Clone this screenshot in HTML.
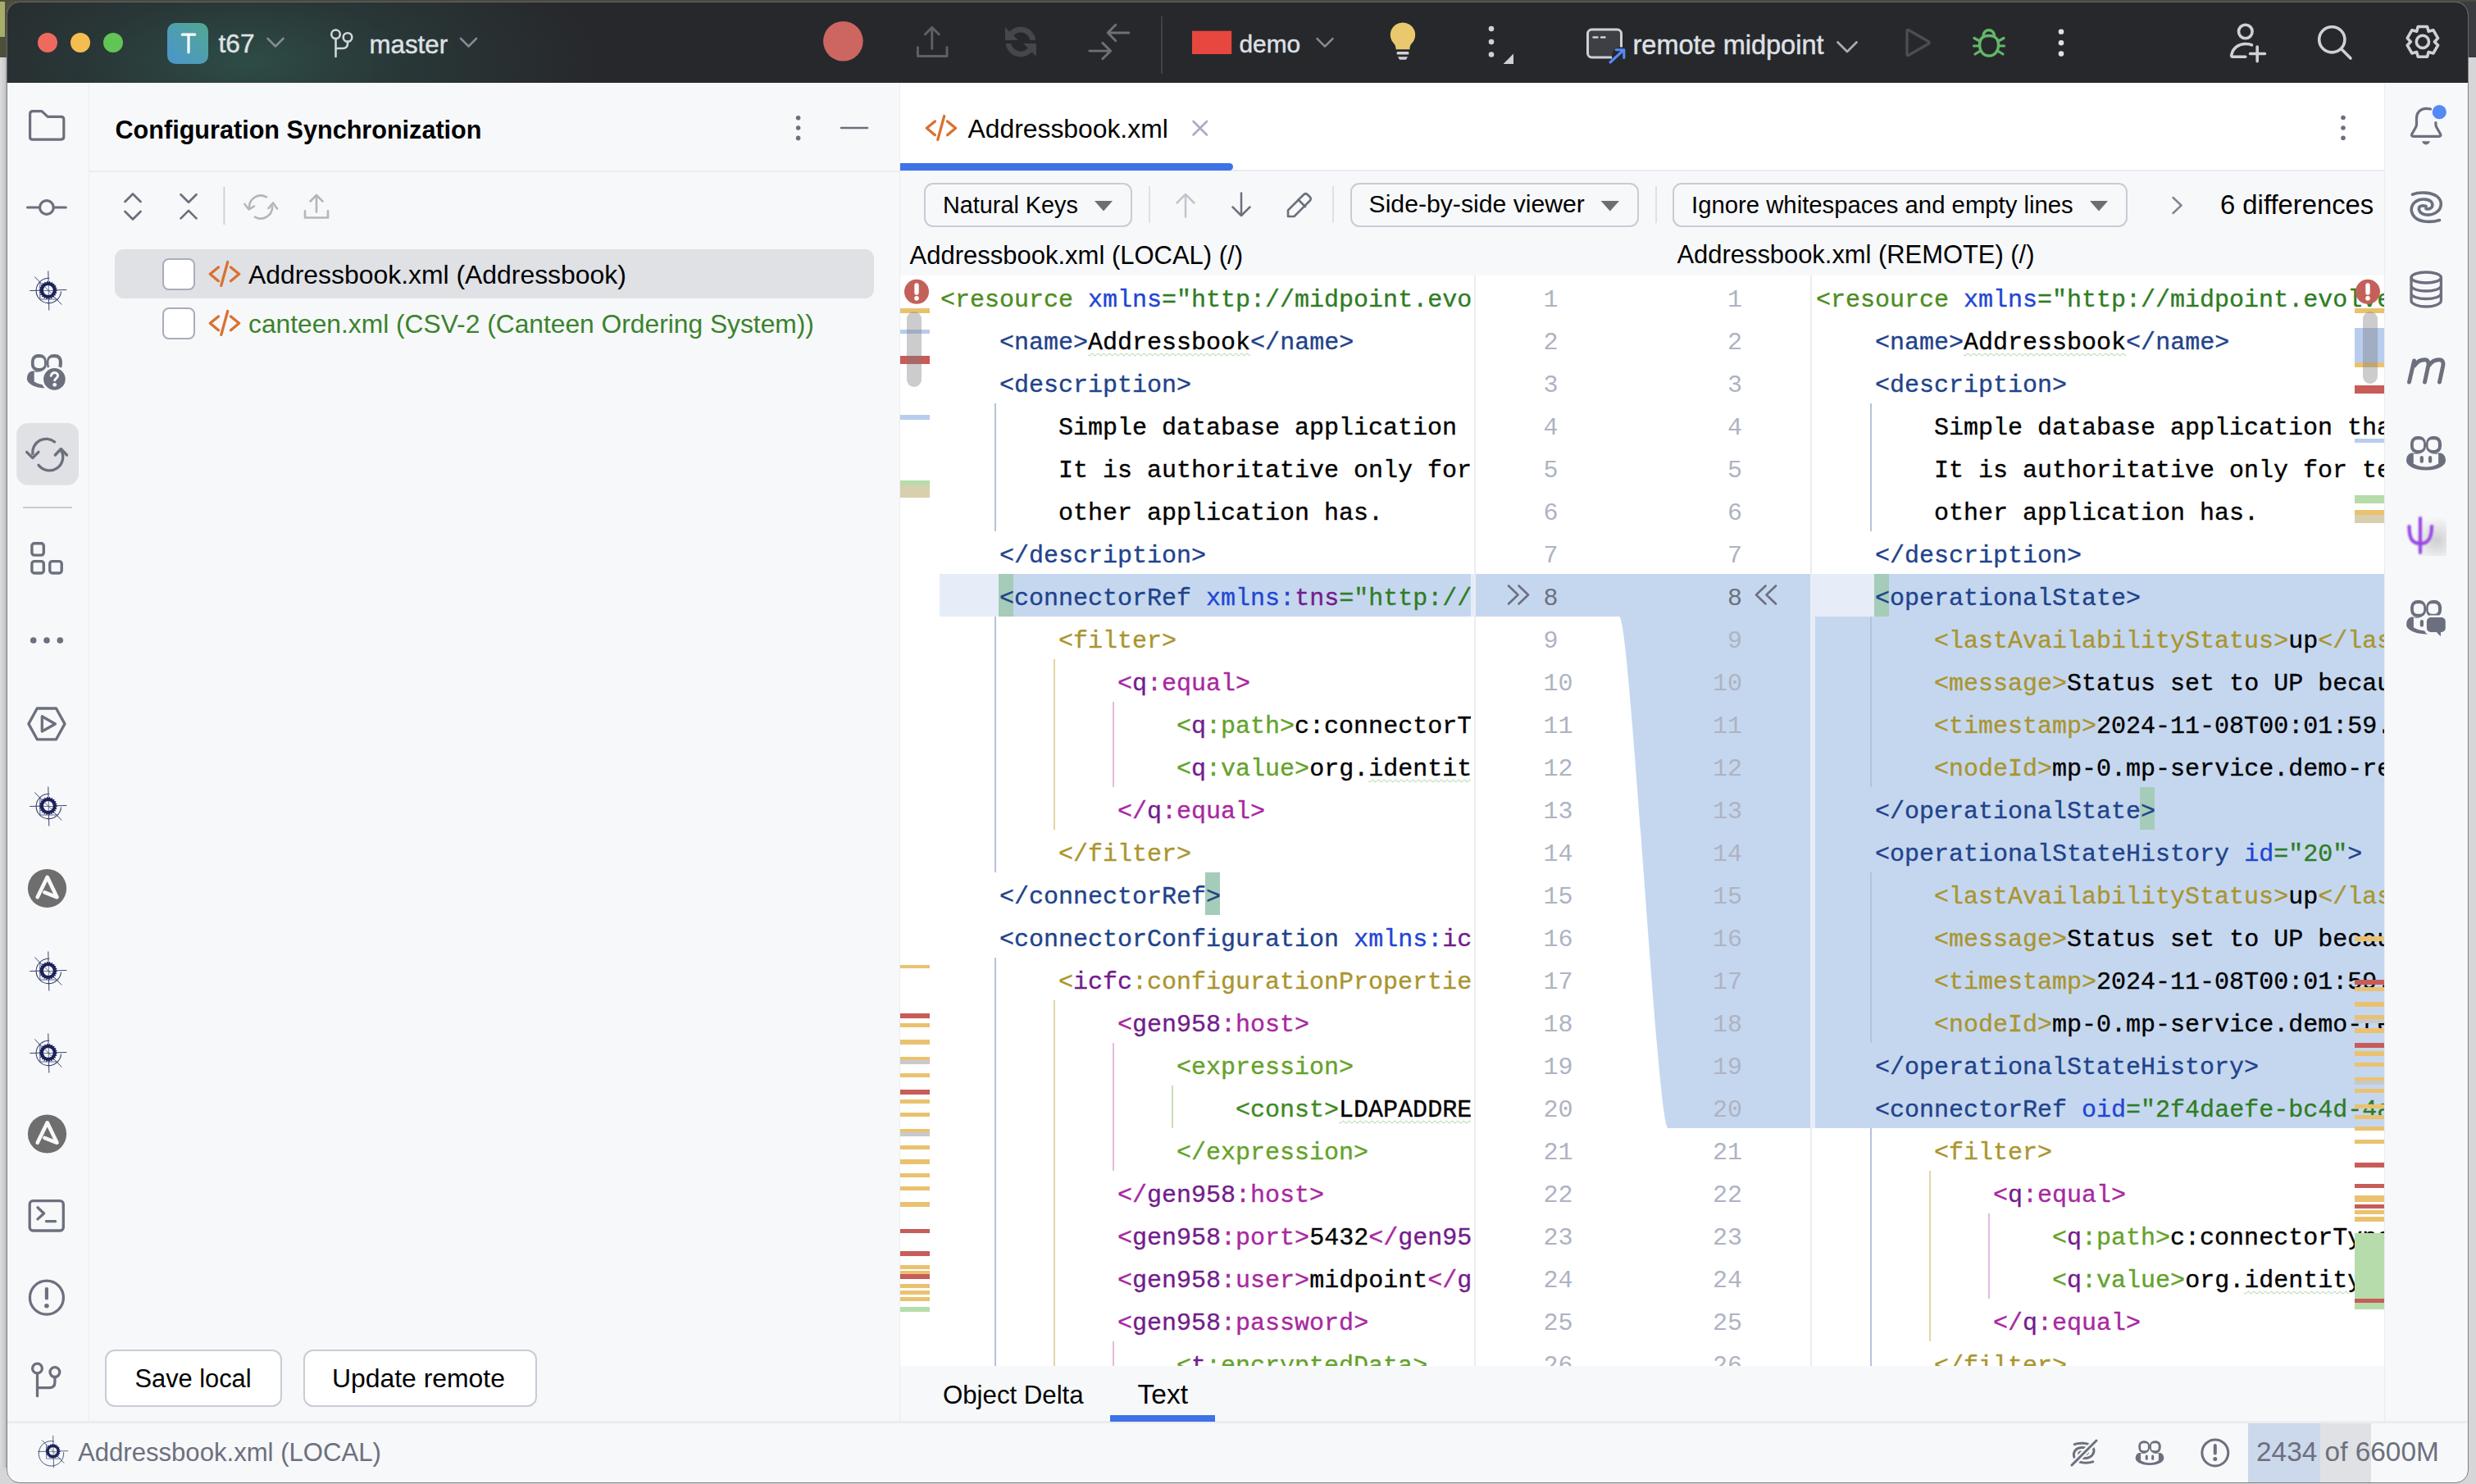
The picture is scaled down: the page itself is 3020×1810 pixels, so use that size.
<!DOCTYPE html>
<html><head><meta charset="utf-8"><style>
*{box-sizing:border-box;margin:0;padding:0}
html,body{width:3020px;height:1810px;overflow:hidden}
body{background:#d3d3d5;font-family:"Liberation Sans",sans-serif;position:relative}
.abs{position:absolute;display:block}
#win{position:absolute;left:0;top:0;width:3020px;height:1810px;clip-path:inset(2px 10px 2px 8px round 15px);background:#f7f8fa;overflow:hidden}
.ui{position:absolute;white-space:pre;line-height:1;font-family:"Liberation Sans",sans-serif}
.code{position:absolute;white-space:pre;font-family:"Liberation Mono",monospace;font-size:30px;line-height:52px;height:52px;color:#000;-webkit-text-stroke:0.35px currentColor}
.ln{position:absolute;white-space:pre;font-family:"Liberation Mono",monospace;font-size:30px;line-height:52px;height:52px;color:#aeb3c2}
</style></head><body>
<div class="abs" style="left:0px;top:0px;width:3020px;height:1810px;background:#d6d6d8;"></div>
<div class="abs" style="left:0;top:70px;width:8px;height:1720px;background:linear-gradient(90deg,#dcdcdc,#cacacc 75%,#a9aaad)"></div>
<div class="abs" style="left:0px;top:0px;width:1500px;height:70px;background:#4d4f3a;"></div>
<div class="abs" style="left:0px;top:0px;width:6px;height:45px;background:#a7ad6a;"></div>
<div class="abs" style="left:2990px;top:0px;width:30px;height:70px;background:#3b3c40;"></div>
<div class="abs" style="left:0px;top:0px;width:3020px;height:2px;background:#4a4b3c;"></div>
<div id="win">
<div class="abs" style="left:0px;top:0px;width:3020px;height:101px;background:#27282c;"></div>
<div class="abs" style="left:0;top:0;width:1400px;height:101px;background:radial-gradient(ellipse 430px 170px at 300px 75px,rgba(46,78,72,.95) 0%,rgba(42,64,62,.6) 45%,rgba(39,40,44,0) 100%)"></div>
<div class="abs" style="left:8px;top:101px;width:3002px;height:1707px;background:#f7f8fa;"></div>
<div class="abs" style="left:108px;top:101px;width:1px;height:1633px;background:#ebecf0;"></div>
<div class="abs" style="left:109px;top:208px;width:988px;height:2px;background:#ebecf0;"></div>
<div class="abs" style="left:1097px;top:101px;width:1px;height:1633px;background:#ebecf0;"></div>
<div class="abs" style="left:1098px;top:101px;width:1810px;height:106px;background:#ffffff;"></div>
<div class="abs" style="left:1098px;top:207px;width:1810px;height:2px;background:#ebecf0;"></div>
<div class="abs" style="left:1098px;top:336px;width:1810px;height:1330px;background:#ffffff;"></div>
<div class="abs" style="left:2908px;top:101px;width:1px;height:1633px;background:#ebecf0;"></div>
<div class="abs" style="left:8px;top:1733px;width:3002px;height:3px;background:#ebecf0;"></div>
<div class="abs" style="left:140px;top:304px;width:926px;height:59.5px;border-radius:11px;background:#dfe1e5"></div>
<div class="abs" style="left:198px;top:314.5px;width:40px;height:39px;border-radius:8px;background:#fff;border:2.4px solid #a9adbb"></div>
<div class="abs" style="left:198px;top:374.5px;width:40px;height:39px;border-radius:8px;background:#fff;border:2.4px solid #a9adbb"></div>
<div class="abs" style="left:127.5px;top:1645.5px;width:216.5px;height:70.5px;border-radius:12px;background:#fff;border:2.4px solid #c9ccd6"></div>
<div class="abs" style="left:369.5px;top:1645.5px;width:285px;height:70.5px;border-radius:12px;background:#fff;border:2.4px solid #c9ccd6"></div>
<div class="abs" style="left:1126.7px;top:222.7px;width:254.29999999999995px;height:54.5px;border-radius:11px;border:2.4px solid #c9ccd6"></div>
<div class="abs" style="left:1646.6px;top:222.7px;width:352.4000000000001px;height:54.5px;border-radius:11px;border:2.4px solid #c9ccd6"></div>
<div class="abs" style="left:2040.3px;top:222.7px;width:555.2px;height:54.5px;border-radius:11px;border:2.4px solid #c9ccd6"></div>
<div class="abs" style="left:1400.5px;top:226.5px;width:2.0px;height:45.0px;background:#dfe1e5;"></div>
<div class="abs" style="left:1624.5px;top:226.5px;width:2.0px;height:45.0px;background:#dfe1e5;"></div>
<div class="abs" style="left:2018.5px;top:226.5px;width:2.0px;height:45.0px;background:#dfe1e5;"></div>
<div class="abs" style="left:1098px;top:198.5px;width:406px;height:9px;border-radius:0 4.5px 4.5px 0;background:#3f72e6"></div>
<div class="abs" style="left:1354px;top:1726px;width:128px;height:8px;background:#3f72e6;"></div>
<div class="abs" style="left:2742px;top:1736px;width:88px;height:72px;background:#ccd8ec;"></div>
<div class="abs" style="left:2830px;top:1736px;width:62px;height:72px;background:#dfe1e5;"></div>
<div class="abs" style="left:1146px;top:700px;width:72px;height:52px;background:#e6edf8;"></div>
<div class="abs" style="left:1218px;top:700px;width:576px;height:52px;background:#c5d7ef;"></div>
<div class="abs" style="left:1794px;top:700px;width:4px;height:52px;background:#e6edf8;"></div>
<div class="abs" style="left:1218px;top:700px;width:18px;height:52px;background:#a5ccb9;"></div>
<div class="abs" style="left:1470px;top:1064px;width:18px;height:52px;background:#a5ccb9;"></div>
<div class="abs" style="left:2210px;top:700px;width:76px;height:52px;background:#e6edf8;"></div>
<div class="abs" style="left:2286px;top:700px;width:622px;height:52px;background:#c5d7ef;"></div>
<div class="abs" style="left:2210px;top:752px;width:4px;height:624px;background:#e6edf8;"></div>
<div class="abs" style="left:2214px;top:752px;width:694px;height:624px;background:#c5d7ef;"></div>
<div class="abs" style="left:2286px;top:700px;width:18px;height:52px;background:#a5ccb9;"></div>
<div class="abs" style="left:2610px;top:960px;width:18px;height:52px;background:#a5ccb9;"></div>
<div class="abs" style="left:1798px;top:336px;width:2px;height:1330px;background:#ebecf0;"></div>
<div class="abs" style="left:2208px;top:336px;width:2px;height:1330px;background:#ebecf0;"></div>
<svg class="abs" style="left:0;top:0" width="3020" height="1810" viewBox="0 0 3020 1810"><path d="M1800,700 L2208,700 L2208,1376 L2034.5,1376 C2021,1376 1988.5,752 1975,752 L1800,752 Z" fill="#c5d7ef"/></svg>
<div class="abs" style="left:1213px;top:492px;width:2px;height:156px;background:#b6c3da;"></div>
<div class="abs" style="left:1213px;top:752px;width:2px;height:312px;background:#b6c3da;"></div>
<div class="abs" style="left:1285px;top:804px;width:2px;height:208px;background:#e2d6a6;"></div>
<div class="abs" style="left:1357px;top:856px;width:2px;height:104px;background:#e6b8e2;"></div>
<div class="abs" style="left:1213px;top:1168px;width:2px;height:498px;background:#b6c3da;"></div>
<div class="abs" style="left:1285px;top:1220px;width:2px;height:446px;background:#e2d6a6;"></div>
<div class="abs" style="left:1357px;top:1272px;width:2px;height:156px;background:#e6b8e2;"></div>
<div class="abs" style="left:1429px;top:1324px;width:2px;height:52px;background:#c6e1b4;"></div>
<div class="abs" style="left:1357px;top:1636px;width:2px;height:30px;background:#e6b8e2;"></div>
<div class="abs" style="left:2281px;top:492px;width:2px;height:156px;background:#b6c3da;"></div>
<div class="abs" style="left:2281px;top:752px;width:2px;height:208px;background:#b6c3da;"></div>
<div class="abs" style="left:2281px;top:1064px;width:2px;height:208px;background:#b6c3da;"></div>
<div class="abs" style="left:2281px;top:1376px;width:2px;height:290px;background:#b6c3da;"></div>
<div class="abs" style="left:2353px;top:1428px;width:2px;height:208px;background:#e2d6a6;"></div>
<div class="abs" style="left:2425px;top:1480px;width:2px;height:104px;background:#e6b8e2;"></div>
<div class="abs" style="left:1140px;top:336px;width:654px;height:1330px;overflow:hidden">
<div class="code" style="left:7px;top:4px"><span style="color:#4d8d22;">&lt;</span><span style="color:#4d8d22;">resource</span> <span style="color:#2146d4;">xmlns</span><span style="color:#2f7d24;">=&quot;http://midpoint.evolveum.com/xml/ns/public/common/common-3&quot;</span></div>
<div class="code" style="left:7px;top:56px">    <span style="color:#1f438b;">&lt;</span><span style="color:#1f438b;">name</span><span style="color:#1f438b;">&gt;</span><span style="color:#000;text-decoration:underline wavy #a3cf98;text-decoration-thickness:1.3px;text-underline-offset:4px">Addressbook</span><span style="color:#1f438b;">&lt;/</span><span style="color:#1f438b;">name</span><span style="color:#1f438b;">&gt;</span></div>
<div class="code" style="left:7px;top:108px">    <span style="color:#1f438b;">&lt;</span><span style="color:#1f438b;">description</span><span style="color:#1f438b;">&gt;</span></div>
<div class="code" style="left:7px;top:160px">        <span style="color:#000000;">Simple database application that is used for testing</span></div>
<div class="code" style="left:7px;top:212px">        <span style="color:#000000;">It is authoritative only for testing purposes</span></div>
<div class="code" style="left:7px;top:264px">        <span style="color:#000000;">other application has.</span></div>
<div class="code" style="left:7px;top:316px">    <span style="color:#1f438b;">&lt;/</span><span style="color:#1f438b;">description</span><span style="color:#1f438b;">&gt;</span></div>
<div class="code" style="left:7px;top:368px">    <span style="color:#1f438b;">&lt;</span><span style="color:#1f438b;">connectorRef</span> <span style="color:#2146d4;">xmlns:</span><span style="color:#731c8c;">tns</span><span style="color:#2f7d24;">=&quot;http://midpoint.evolveum.com/xml/ns/public/common/common-3&quot;</span></div>
<div class="code" style="left:7px;top:420px">        <span style="color:#aa952f;">&lt;</span><span style="color:#aa952f;">filter</span><span style="color:#aa952f;">&gt;</span></div>
<div class="code" style="left:7px;top:472px">            <span style="color:#a8289f;">&lt;</span><span style="color:#731c8c;">q</span><span style="color:#a8289f;">:equal</span><span style="color:#a8289f;">&gt;</span></div>
<div class="code" style="left:7px;top:524px">                <span style="color:#64a22b;">&lt;</span><span style="color:#731c8c;">q</span><span style="color:#64a22b;">:path</span><span style="color:#64a22b;">&gt;</span><span style="color:#000000;">c:connectorType</span></div>
<div class="code" style="left:7px;top:576px">                <span style="color:#64a22b;">&lt;</span><span style="color:#731c8c;">q</span><span style="color:#64a22b;">:value</span><span style="color:#64a22b;">&gt;</span><span style="color:#000000;">org.</span><span style="color:#000;text-decoration:underline wavy #a3cf98;text-decoration-thickness:1.3px;text-underline-offset:4px">identityconnectors</span></div>
<div class="code" style="left:7px;top:628px">            <span style="color:#a8289f;">&lt;/</span><span style="color:#731c8c;">q</span><span style="color:#a8289f;">:equal</span><span style="color:#a8289f;">&gt;</span></div>
<div class="code" style="left:7px;top:680px">        <span style="color:#aa952f;">&lt;/</span><span style="color:#aa952f;">filter</span><span style="color:#aa952f;">&gt;</span></div>
<div class="code" style="left:7px;top:732px">    <span style="color:#1f438b;">&lt;/</span><span style="color:#1f438b;">connectorRef</span><span style="color:#1f438b;">&gt;</span></div>
<div class="code" style="left:7px;top:784px">    <span style="color:#1f438b;">&lt;</span><span style="color:#1f438b;">connectorConfiguration</span> <span style="color:#2146d4;">xmlns:</span><span style="color:#731c8c;">icfc</span><span style="color:#2f7d24;">=&quot;http://midpoint&quot;</span></div>
<div class="code" style="left:7px;top:836px">        <span style="color:#aa952f;">&lt;</span><span style="color:#731c8c;">icfc</span><span style="color:#aa952f;">:configurationProperties</span> </div>
<div class="code" style="left:7px;top:888px">            <span style="color:#a8289f;">&lt;</span><span style="color:#731c8c;">gen958</span><span style="color:#a8289f;">:host</span><span style="color:#a8289f;">&gt;</span></div>
<div class="code" style="left:7px;top:940px">                <span style="color:#64a22b;">&lt;</span><span style="color:#64a22b;">expression</span><span style="color:#64a22b;">&gt;</span></div>
<div class="code" style="left:7px;top:992px">                    <span style="color:#3e8a25;">&lt;</span><span style="color:#3e8a25;">const</span><span style="color:#3e8a25;">&gt;</span><span style="color:#000;text-decoration:underline wavy #a3cf98;text-decoration-thickness:1.3px;text-underline-offset:4px">LDAPADDRESS</span></div>
<div class="code" style="left:7px;top:1044px">                <span style="color:#64a22b;">&lt;/</span><span style="color:#64a22b;">expression</span><span style="color:#64a22b;">&gt;</span></div>
<div class="code" style="left:7px;top:1096px">            <span style="color:#a8289f;">&lt;/</span><span style="color:#731c8c;">gen958</span><span style="color:#a8289f;">:host</span><span style="color:#a8289f;">&gt;</span></div>
<div class="code" style="left:7px;top:1148px">            <span style="color:#a8289f;">&lt;</span><span style="color:#731c8c;">gen958</span><span style="color:#a8289f;">:port</span><span style="color:#a8289f;">&gt;</span><span style="color:#000000;">5432</span><span style="color:#a8289f;">&lt;/</span><span style="color:#731c8c;">gen958</span><span style="color:#a8289f;">:port</span><span style="color:#a8289f;">&gt;</span></div>
<div class="code" style="left:7px;top:1200px">            <span style="color:#a8289f;">&lt;</span><span style="color:#731c8c;">gen958</span><span style="color:#a8289f;">:user</span><span style="color:#a8289f;">&gt;</span><span style="color:#000000;">midpoint</span><span style="color:#a8289f;">&lt;/</span><span style="color:#731c8c;">gen958</span><span style="color:#a8289f;">:user</span><span style="color:#a8289f;">&gt;</span></div>
<div class="code" style="left:7px;top:1252px">            <span style="color:#a8289f;">&lt;</span><span style="color:#731c8c;">gen958</span><span style="color:#a8289f;">:password</span><span style="color:#a8289f;">&gt;</span></div>
<div class="code" style="left:7px;top:1304px">                <span style="color:#64a22b;">&lt;</span><span style="color:#731c8c;">t</span><span style="color:#64a22b;">:encryptedData</span><span style="color:#64a22b;">&gt;</span></div>
</div>
<div class="abs" style="left:2210px;top:336px;width:698px;height:1330px;overflow:hidden">
<div class="code" style="left:5px;top:4px"><span style="color:#4d8d22;">&lt;</span><span style="color:#4d8d22;">resource</span> <span style="color:#2146d4;">xmlns</span><span style="color:#2f7d24;">=&quot;http://midpoint.evolveum.com/xml/ns/public/common/common-3&quot;</span></div>
<div class="code" style="left:5px;top:56px">    <span style="color:#1f438b;">&lt;</span><span style="color:#1f438b;">name</span><span style="color:#1f438b;">&gt;</span><span style="color:#000;text-decoration:underline wavy #a3cf98;text-decoration-thickness:1.3px;text-underline-offset:4px">Addressbook</span><span style="color:#1f438b;">&lt;/</span><span style="color:#1f438b;">name</span><span style="color:#1f438b;">&gt;</span></div>
<div class="code" style="left:5px;top:108px">    <span style="color:#1f438b;">&lt;</span><span style="color:#1f438b;">description</span><span style="color:#1f438b;">&gt;</span></div>
<div class="code" style="left:5px;top:160px">        <span style="color:#000000;">Simple database application that is used for testing</span></div>
<div class="code" style="left:5px;top:212px">        <span style="color:#000000;">It is authoritative only for testing purposes</span></div>
<div class="code" style="left:5px;top:264px">        <span style="color:#000000;">other application has.</span></div>
<div class="code" style="left:5px;top:316px">    <span style="color:#1f438b;">&lt;/</span><span style="color:#1f438b;">description</span><span style="color:#1f438b;">&gt;</span></div>
<div class="code" style="left:5px;top:368px">    <span style="color:#1f438b;">&lt;</span><span style="color:#1f438b;">operationalState</span><span style="color:#1f438b;">&gt;</span></div>
<div class="code" style="left:5px;top:420px">        <span style="color:#aa952f;">&lt;</span><span style="color:#aa952f;">lastAvailabilityStatus</span><span style="color:#aa952f;">&gt;</span><span style="color:#000000;">up</span><span style="color:#aa952f;">&lt;/</span><span style="color:#aa952f;">lastAvailabilityStatus</span><span style="color:#aa952f;">&gt;</span></div>
<div class="code" style="left:5px;top:472px">        <span style="color:#aa952f;">&lt;</span><span style="color:#aa952f;">message</span><span style="color:#aa952f;">&gt;</span><span style="color:#000000;">Status set to UP because</span></div>
<div class="code" style="left:5px;top:524px">        <span style="color:#aa952f;">&lt;</span><span style="color:#aa952f;">timestamp</span><span style="color:#aa952f;">&gt;</span><span style="color:#000000;">2024-11-08T00:01:59.123Z</span></div>
<div class="code" style="left:5px;top:576px">        <span style="color:#aa952f;">&lt;</span><span style="color:#aa952f;">nodeId</span><span style="color:#aa952f;">&gt;</span><span style="color:#000000;">mp-0.mp-service.demo-remote</span></div>
<div class="code" style="left:5px;top:628px">    <span style="color:#1f438b;">&lt;/</span><span style="color:#1f438b;">operationalState</span><span style="color:#1f438b;">&gt;</span></div>
<div class="code" style="left:5px;top:680px">    <span style="color:#1f438b;">&lt;</span><span style="color:#1f438b;">operationalStateHistory</span> <span style="color:#2146d4;">id</span><span style="color:#2f7d24;">=&quot;20&quot;</span><span style="color:#1f438b;">&gt;</span></div>
<div class="code" style="left:5px;top:732px">        <span style="color:#aa952f;">&lt;</span><span style="color:#aa952f;">lastAvailabilityStatus</span><span style="color:#aa952f;">&gt;</span><span style="color:#000000;">up</span><span style="color:#aa952f;">&lt;/</span><span style="color:#aa952f;">lastAvailabilityStatus</span><span style="color:#aa952f;">&gt;</span></div>
<div class="code" style="left:5px;top:784px">        <span style="color:#aa952f;">&lt;</span><span style="color:#aa952f;">message</span><span style="color:#aa952f;">&gt;</span><span style="color:#000000;">Status set to UP because</span></div>
<div class="code" style="left:5px;top:836px">        <span style="color:#aa952f;">&lt;</span><span style="color:#aa952f;">timestamp</span><span style="color:#aa952f;">&gt;</span><span style="color:#000000;">2024-11-08T00:01:59.123Z</span></div>
<div class="code" style="left:5px;top:888px">        <span style="color:#aa952f;">&lt;</span><span style="color:#aa952f;">nodeId</span><span style="color:#aa952f;">&gt;</span><span style="color:#000000;">mp-0.mp-service.demo-remote</span></div>
<div class="code" style="left:5px;top:940px">    <span style="color:#1f438b;">&lt;/</span><span style="color:#1f438b;">operationalStateHistory</span><span style="color:#1f438b;">&gt;</span></div>
<div class="code" style="left:5px;top:992px">    <span style="color:#1f438b;">&lt;</span><span style="color:#1f438b;">connectorRef</span> <span style="color:#2146d4;">oid</span><span style="color:#2f7d24;">=&quot;2f4daefe-bc4d-4a2b&quot;</span></div>
<div class="code" style="left:5px;top:1044px">        <span style="color:#aa952f;">&lt;</span><span style="color:#aa952f;">filter</span><span style="color:#aa952f;">&gt;</span></div>
<div class="code" style="left:5px;top:1096px">            <span style="color:#a8289f;">&lt;</span><span style="color:#731c8c;">q</span><span style="color:#a8289f;">:equal</span><span style="color:#a8289f;">&gt;</span></div>
<div class="code" style="left:5px;top:1148px">                <span style="color:#64a22b;">&lt;</span><span style="color:#731c8c;">q</span><span style="color:#64a22b;">:path</span><span style="color:#64a22b;">&gt;</span><span style="color:#000000;">c:connectorType</span></div>
<div class="code" style="left:5px;top:1200px">                <span style="color:#64a22b;">&lt;</span><span style="color:#731c8c;">q</span><span style="color:#64a22b;">:value</span><span style="color:#64a22b;">&gt;</span><span style="color:#000000;">org.</span><span style="color:#000;text-decoration:underline wavy #a3cf98;text-decoration-thickness:1.3px;text-underline-offset:4px">identityconnectors</span></div>
<div class="code" style="left:5px;top:1252px">            <span style="color:#a8289f;">&lt;/</span><span style="color:#731c8c;">q</span><span style="color:#a8289f;">:equal</span><span style="color:#a8289f;">&gt;</span></div>
<div class="code" style="left:5px;top:1304px">        <span style="color:#aa952f;">&lt;/</span><span style="color:#aa952f;">filter</span><span style="color:#aa952f;">&gt;</span></div>
</div>
<div class="abs" style="left:1800px;top:336px;width:408px;height:1330px;overflow:hidden">
<div class="ln" style="left:82.5px;top:4px;color:#aeb3c2">1</div>
<div class="ln" style="left:125px;width:200px;text-align:right;top:4px;color:#aeb3c2">1</div>
<div class="ln" style="left:82.5px;top:56px;color:#aeb3c2">2</div>
<div class="ln" style="left:125px;width:200px;text-align:right;top:56px;color:#aeb3c2">2</div>
<div class="ln" style="left:82.5px;top:108px;color:#aeb3c2">3</div>
<div class="ln" style="left:125px;width:200px;text-align:right;top:108px;color:#aeb3c2">3</div>
<div class="ln" style="left:82.5px;top:160px;color:#aeb3c2">4</div>
<div class="ln" style="left:125px;width:200px;text-align:right;top:160px;color:#aeb3c2">4</div>
<div class="ln" style="left:82.5px;top:212px;color:#aeb3c2">5</div>
<div class="ln" style="left:125px;width:200px;text-align:right;top:212px;color:#aeb3c2">5</div>
<div class="ln" style="left:82.5px;top:264px;color:#aeb3c2">6</div>
<div class="ln" style="left:125px;width:200px;text-align:right;top:264px;color:#aeb3c2">6</div>
<div class="ln" style="left:82.5px;top:316px;color:#aeb3c2">7</div>
<div class="ln" style="left:125px;width:200px;text-align:right;top:316px;color:#aeb3c2">7</div>
<div class="ln" style="left:82.5px;top:368px;color:#6c707e">8</div>
<div class="ln" style="left:125px;width:200px;text-align:right;top:368px;color:#6c707e">8</div>
<div class="ln" style="left:82.5px;top:420px;color:#aeb3c2">9</div>
<div class="ln" style="left:125px;width:200px;text-align:right;top:420px;color:#aeb3c2">9</div>
<div class="ln" style="left:82.5px;top:472px;color:#aeb3c2">10</div>
<div class="ln" style="left:125px;width:200px;text-align:right;top:472px;color:#aeb3c2">10</div>
<div class="ln" style="left:82.5px;top:524px;color:#aeb3c2">11</div>
<div class="ln" style="left:125px;width:200px;text-align:right;top:524px;color:#aeb3c2">11</div>
<div class="ln" style="left:82.5px;top:576px;color:#aeb3c2">12</div>
<div class="ln" style="left:125px;width:200px;text-align:right;top:576px;color:#aeb3c2">12</div>
<div class="ln" style="left:82.5px;top:628px;color:#aeb3c2">13</div>
<div class="ln" style="left:125px;width:200px;text-align:right;top:628px;color:#aeb3c2">13</div>
<div class="ln" style="left:82.5px;top:680px;color:#aeb3c2">14</div>
<div class="ln" style="left:125px;width:200px;text-align:right;top:680px;color:#aeb3c2">14</div>
<div class="ln" style="left:82.5px;top:732px;color:#aeb3c2">15</div>
<div class="ln" style="left:125px;width:200px;text-align:right;top:732px;color:#aeb3c2">15</div>
<div class="ln" style="left:82.5px;top:784px;color:#aeb3c2">16</div>
<div class="ln" style="left:125px;width:200px;text-align:right;top:784px;color:#aeb3c2">16</div>
<div class="ln" style="left:82.5px;top:836px;color:#aeb3c2">17</div>
<div class="ln" style="left:125px;width:200px;text-align:right;top:836px;color:#aeb3c2">17</div>
<div class="ln" style="left:82.5px;top:888px;color:#aeb3c2">18</div>
<div class="ln" style="left:125px;width:200px;text-align:right;top:888px;color:#aeb3c2">18</div>
<div class="ln" style="left:82.5px;top:940px;color:#aeb3c2">19</div>
<div class="ln" style="left:125px;width:200px;text-align:right;top:940px;color:#aeb3c2">19</div>
<div class="ln" style="left:82.5px;top:992px;color:#aeb3c2">20</div>
<div class="ln" style="left:125px;width:200px;text-align:right;top:992px;color:#aeb3c2">20</div>
<div class="ln" style="left:82.5px;top:1044px;color:#aeb3c2">21</div>
<div class="ln" style="left:125px;width:200px;text-align:right;top:1044px;color:#aeb3c2">21</div>
<div class="ln" style="left:82.5px;top:1096px;color:#aeb3c2">22</div>
<div class="ln" style="left:125px;width:200px;text-align:right;top:1096px;color:#aeb3c2">22</div>
<div class="ln" style="left:82.5px;top:1148px;color:#aeb3c2">23</div>
<div class="ln" style="left:125px;width:200px;text-align:right;top:1148px;color:#aeb3c2">23</div>
<div class="ln" style="left:82.5px;top:1200px;color:#aeb3c2">24</div>
<div class="ln" style="left:125px;width:200px;text-align:right;top:1200px;color:#aeb3c2">24</div>
<div class="ln" style="left:82.5px;top:1252px;color:#aeb3c2">25</div>
<div class="ln" style="left:125px;width:200px;text-align:right;top:1252px;color:#aeb3c2">25</div>
<div class="ln" style="left:82.5px;top:1304px;color:#aeb3c2">26</div>
<div class="ln" style="left:125px;width:200px;text-align:right;top:1304px;color:#aeb3c2">26</div>
</div>
<div class="abs" style="left:1098px;top:376px;width:36px;height:5.600000000000023px;background:#eac26f;"></div>
<div class="abs" style="left:1098px;top:402px;width:36px;height:5px;background:#b8cdee;"></div>
<div class="abs" style="left:1098px;top:434px;width:36px;height:9.5px;background:#c75c58;"></div>
<div class="abs" style="left:1098px;top:506px;width:36px;height:5.5px;background:#b8cdee;"></div>
<div class="abs" style="left:1098px;top:586px;width:36px;height:6px;background:#b6dcab;"></div>
<div class="abs" style="left:1098px;top:592px;width:36px;height:15px;background:#d7cfae;"></div>
<div class="abs" style="left:1098px;top:1176.6px;width:36px;height:4.900000000000091px;background:#eac26f;"></div>
<div class="abs" style="left:1098px;top:1236px;width:36px;height:5.7999999999999545px;background:#c75c58;"></div>
<div class="abs" style="left:1098px;top:1248px;width:36px;height:5px;background:#eac26f;"></div>
<div class="abs" style="left:1098px;top:1268px;width:36px;height:6px;background:#eac26f;"></div>
<div class="abs" style="left:1098px;top:1288.7px;width:36px;height:4.2999999999999545px;background:#eac26f;"></div>
<div class="abs" style="left:1098px;top:1293px;width:36px;height:5px;background:#c8c9cc;"></div>
<div class="abs" style="left:1098px;top:1308.7px;width:36px;height:5.2999999999999545px;background:#eac26f;"></div>
<div class="abs" style="left:1098px;top:1328.7px;width:36px;height:5.899999999999864px;background:#c75c58;"></div>
<div class="abs" style="left:1098px;top:1341px;width:36px;height:5px;background:#eac26f;"></div>
<div class="abs" style="left:1098px;top:1357px;width:36px;height:5px;background:#eac26f;"></div>
<div class="abs" style="left:1098px;top:1376.6px;width:36px;height:4.400000000000091px;background:#eac26f;"></div>
<div class="abs" style="left:1098px;top:1381px;width:36px;height:5px;background:#c8c9cc;"></div>
<div class="abs" style="left:1098px;top:1396.6px;width:36px;height:5.400000000000091px;background:#eac26f;"></div>
<div class="abs" style="left:1098px;top:1414px;width:36px;height:5.5px;background:#eac26f;"></div>
<div class="abs" style="left:1098px;top:1430.6px;width:36px;height:5.400000000000091px;background:#eac26f;"></div>
<div class="abs" style="left:1098px;top:1446.8px;width:36px;height:5.2000000000000455px;background:#eac26f;"></div>
<div class="abs" style="left:1098px;top:1466.4px;width:36px;height:5.599999999999909px;background:#eac26f;"></div>
<div class="abs" style="left:1098px;top:1498.5px;width:36px;height:5.5px;background:#c75c58;"></div>
<div class="abs" style="left:1098px;top:1526.4px;width:36px;height:5.599999999999909px;background:#c75c58;"></div>
<div class="abs" style="left:1098px;top:1542.6px;width:36px;height:5.0px;background:#eac26f;"></div>
<div class="abs" style="left:1098px;top:1550px;width:36px;height:4px;background:#eac26f;"></div>
<div class="abs" style="left:1098px;top:1554px;width:36px;height:6px;background:#c75c58;"></div>
<div class="abs" style="left:1098px;top:1566px;width:36px;height:5px;background:#eac26f;"></div>
<div class="abs" style="left:1098px;top:1574px;width:36px;height:5px;background:#eac26f;"></div>
<div class="abs" style="left:1098px;top:1582px;width:36px;height:5px;background:#eac26f;"></div>
<div class="abs" style="left:1098px;top:1594px;width:36px;height:6px;background:#b6dcab;"></div>
<div class="abs" style="left:2872px;top:376px;width:36px;height:5.600000000000023px;background:#eac26f;"></div>
<div class="abs" style="left:2872px;top:400px;width:36px;height:42px;background:#b8cdee;"></div>
<div class="abs" style="left:2872px;top:442px;width:36px;height:5.699999999999989px;background:#eac26f;"></div>
<div class="abs" style="left:2872px;top:470px;width:36px;height:9.600000000000023px;background:#c75c58;"></div>
<div class="abs" style="left:2872px;top:534.5px;width:36px;height:5.0px;background:#b8cdee;"></div>
<div class="abs" style="left:2872px;top:604px;width:36px;height:9.799999999999955px;background:#b6dcab;"></div>
<div class="abs" style="left:2872px;top:621.8px;width:36px;height:6.2000000000000455px;background:#eac26f;"></div>
<div class="abs" style="left:2872px;top:628px;width:36px;height:10px;background:#d7cfae;"></div>
<div class="abs" style="left:2872px;top:1142px;width:36px;height:6px;background:#eac26f;"></div>
<div class="abs" style="left:2872px;top:1194.7px;width:36px;height:6.0px;background:#c75c58;"></div>
<div class="abs" style="left:2872px;top:1203.6px;width:36px;height:5.400000000000091px;background:#eac26f;"></div>
<div class="abs" style="left:2872px;top:1222px;width:36px;height:5.5px;background:#eac26f;"></div>
<div class="abs" style="left:2872px;top:1238px;width:36px;height:5px;background:#eac26f;"></div>
<div class="abs" style="left:2872px;top:1243px;width:36px;height:5px;background:#c8c9cc;"></div>
<div class="abs" style="left:2872px;top:1254px;width:36px;height:5.5px;background:#eac26f;"></div>
<div class="abs" style="left:2872px;top:1272px;width:36px;height:6px;background:#c75c58;"></div>
<div class="abs" style="left:2872px;top:1282px;width:36px;height:5.5px;background:#eac26f;"></div>
<div class="abs" style="left:2872px;top:1295.7px;width:36px;height:5.2999999999999545px;background:#eac26f;"></div>
<div class="abs" style="left:2872px;top:1313.5px;width:36px;height:4.5px;background:#eac26f;"></div>
<div class="abs" style="left:2872px;top:1318px;width:36px;height:5px;background:#c8c9cc;"></div>
<div class="abs" style="left:2872px;top:1328px;width:36px;height:5px;background:#eac26f;"></div>
<div class="abs" style="left:2872px;top:1346.8px;width:36px;height:5.2000000000000455px;background:#eac26f;"></div>
<div class="abs" style="left:2872px;top:1360px;width:36px;height:5px;background:#eac26f;"></div>
<div class="abs" style="left:2872px;top:1373.5px;width:36px;height:5.5px;background:#eac26f;"></div>
<div class="abs" style="left:2872px;top:1390px;width:36px;height:5px;background:#eac26f;"></div>
<div class="abs" style="left:2872px;top:1418px;width:36px;height:6px;background:#c75c58;"></div>
<div class="abs" style="left:2872px;top:1443.7px;width:36px;height:5.2999999999999545px;background:#c75c58;"></div>
<div class="abs" style="left:2872px;top:1458px;width:36px;height:8px;background:#eac26f;"></div>
<div class="abs" style="left:2872px;top:1469px;width:36px;height:5px;background:#c75c58;"></div>
<div class="abs" style="left:2872px;top:1476px;width:36px;height:5px;background:#eac26f;"></div>
<div class="abs" style="left:2872px;top:1484px;width:36px;height:6px;background:#eac26f;"></div>
<div class="abs" style="left:2872px;top:1503.8px;width:36px;height:93.20000000000005px;background:#b6dcab;"></div>
<div class="abs" style="left:2872px;top:1583.8px;width:36px;height:5.2000000000000455px;background:#c75c58;"></div>
<div class="abs" style="left:1106px;top:380px;width:17.7px;height:91.6px;border-radius:9px;background:rgba(120,120,125,.38)"></div>
<div class="abs" style="left:2882px;top:380px;width:18px;height:87.6px;border-radius:9px;background:rgba(120,120,125,.38)"></div>
<svg class="abs" style="left:0;top:0" width="3020" height="1810" viewBox="0 0 3020 1810"><circle cx="1118" cy="355.8" r="15" fill="#c4605a"/><path d="M1118,348 V357" stroke="#fff" stroke-width="5.4" stroke-linecap="round"/><circle cx="1118" cy="363.8" r="2.8" fill="#fff"/><circle cx="2888" cy="355.8" r="15" fill="#c4605a"/><path d="M2888,348 V357" stroke="#fff" stroke-width="5.4" stroke-linecap="round"/><circle cx="2888" cy="363.8" r="2.8" fill="#fff"/><path d="M1840,714.5 L1851.5,725.5 L1840,736.5 M1852.5,714.5 L1864,725.5 L1852.5,736.5" fill="none" stroke="#6c707e" stroke-width="2.6" stroke-linecap="round" stroke-linejoin="round"/><path d="M2153.5,714.5 L2142,725.5 L2153.5,736.5 M2166,714.5 L2154.5,725.5 L2166,736.5" fill="none" stroke="#6c707e" stroke-width="2.6" stroke-linecap="round" stroke-linejoin="round"/></svg>
<svg class="abs" style="left:0;top:0" width="3020" height="1810" viewBox="0 0 3020 1810"><circle cx="58" cy="52" r="12" fill="#ee6a5f"/><circle cx="98" cy="52" r="12" fill="#f5bd4f"/><circle cx="138" cy="52" r="12" fill="#61c454"/><defs><linearGradient id="tg" x1="0" y1="1" x2="1" y2="0"><stop offset="0" stop-color="#4a94cf"/><stop offset="1" stop-color="#52a890"/></linearGradient></defs><rect x="204" y="28" width="50" height="50" rx="10" fill="url(#tg)"/><path d="M222.3,42.2 H237.7 M230,42.2 V63.8" fill="none" stroke="#ffffff" stroke-width="3.2" stroke-linecap="round" stroke-linejoin="round" stroke-linecap="butt"/><path d="M326.5,47 L336,56.5 L345.5,47" fill="none" stroke="#858996" stroke-width="2.6" stroke-linecap="round" stroke-linejoin="round" /><circle cx="409.5" cy="41.8" r="5.3" fill="none" stroke="#d3d5da" stroke-width="2.6"/><circle cx="424" cy="45.5" r="5.3" fill="none" stroke="#d3d5da" stroke-width="2.6"/><path d="M409.5,47.2 V69 M424,50.8 V53 Q424,59 418,59 H409.5" fill="none" stroke="#d3d5da" stroke-width="2.6" stroke-linecap="round" stroke-linejoin="round" /><path d="M562,47 L571.5,56.5 L581,47" fill="none" stroke="#858996" stroke-width="2.6" stroke-linecap="round" stroke-linejoin="round" /><circle cx="1028.4" cy="50.2" r="24.3" fill="#cd6661"/><path d="M1136.8,59.4 V33.5 M1128.3,42 L1136.8,33.5 L1145.4,42 M1119.4,57.6 V68.5 H1155 V57.6" fill="none" stroke="#5e6065" stroke-width="2.9" stroke-linecap="round" stroke-linejoin="round" stroke-linecap="butt"/><circle cx="1244.9" cy="51.1" r="15.0" fill="none" stroke="#45474c" stroke-width="6.8"/><rect x="1224" y="48.9" width="42" height="4.2" fill="#27282c"/><path d="M1226,33.2 L1226,48.9 L1241.8,48.9 Z M1263.9,68.7 L1263.9,53.1 L1248.2,53.1 Z" fill="#45474c" /><path d="M1376.8,40 H1351.5 M1360.8,30.3 L1351.2,40 L1360.8,49.7 M1328.8,62.1 H1354.5 M1344.8,52.4 L1354.6,62.1 L1344.8,71.8" fill="none" stroke="#6d7075" stroke-width="2.9" stroke-linecap="round" stroke-linejoin="round" /><rect x="1416" y="20" width="2" height="70" fill="#404247"/><rect x="1454" y="37.7" width="48.2" height="28.3" fill="#e8473f"/><path d="M1606.5,47.2 L1616,56.7 L1625.5,47.2" fill="none" stroke="#858996" stroke-width="2.6" stroke-linecap="round" stroke-linejoin="round" /><path d="M1711,27.4 A15.1,15.1 0 0,1 1721.5,53.5 Q1719.5,55.5 1719.4,60.3 H1702.7 Q1702.5,55.5 1700.5,53.5 A15.1,15.1 0 0,1 1711,27.4 Z" fill="#eac86d" /><rect x="1703.5" y="63" width="15" height="3.5" rx="1.5" fill="#cfd1d6"/><path d="M1705,69.2 H1717 L1715,72.8 H1707 Z" fill="#cfd1d6"/><circle cx="1819" cy="35.1" r="3.3" fill="#cfd1d6"/><circle cx="1819" cy="51.1" r="3.3" fill="#cfd1d6"/><circle cx="1819" cy="66.5" r="3.3" fill="#cfd1d6"/><path d="M1833.6,78.1 L1846,78.1 L1846,65.6 Z" fill="#cfd1d6"/><rect x="1936.5" y="36" width="41" height="34" rx="5" fill="#3d3f45" stroke="#ced0d6" stroke-width="3"/><path d="M1943.5,45.5 H1948.5 M1953,45.5 H1957.5" fill="none" stroke="#ced0d6" stroke-width="2.4" stroke-linecap="round" stroke-linejoin="round" stroke-linecap="butt"/><circle cx="1977" cy="68.5" r="11" fill="#27282c"/><path d="M1964,76 L1980.5,60.8 M1971.3,60.8 H1980.8 V70.5" fill="none" stroke="#548af7" stroke-width="3.1" stroke-linecap="round" stroke-linejoin="round" /><path d="M2241.5,51.5 L2253,63 L2264.5,51.5" fill="none" stroke="#a9acb3" stroke-width="2.8" stroke-linecap="round" stroke-linejoin="round" /><path d="M2326,38 Q2326,35.5 2328.5,37 L2352,50.5 Q2354,52 2352,53.5 L2328.5,67 Q2326,68.5 2326,66 Z" fill="none" stroke="#4b4d53" stroke-width="3.4" stroke-linecap="round" stroke-linejoin="round" /><path d="M2419,43.5 A6.8,6.8 0 0,1 2432.6,43.5 M2426,68 C2418,68 2414.5,61 2414.5,54.5 C2414.5,47 2419,43.5 2426,43.5 C2433,43.5 2437.6,47 2437.6,54.5 C2437.6,61 2434,68 2426,68 Z" fill="none" stroke="#62b868" stroke-width="3.4" stroke-linecap="round" stroke-linejoin="round" /><path d="M2414.5,50 L2408,46.5 M2414.5,56 H2407.5 M2415.5,62 L2409,66 M2437.6,50 L2444,46.5 M2437.6,56 H2444.5 M2436.5,62 L2443,66" fill="none" stroke="#62b868" stroke-width="3.2" stroke-linecap="round" stroke-linejoin="round" /><circle cx="2514" cy="38.8" r="3.3" fill="#dfe1e5"/><circle cx="2514" cy="52.2" r="3.3" fill="#dfe1e5"/><circle cx="2514" cy="65.6" r="3.3" fill="#dfe1e5"/><circle cx="2738.8" cy="38.5" r="8.3" fill="none" stroke="#ced0d6" stroke-width="3.6"/><path d="M2738.8,69.3 H2723 Q2721,69.3 2722,66 C2724,58 2731,53.5 2738.8,53.5 C2742,53.5 2745,54 2746.5,54.8" fill="none" stroke="#ced0d6" stroke-width="3.6" stroke-linecap="round" stroke-linejoin="round" stroke-linecap="butt"/><path d="M2753.2,57 V74.8 M2744.5,65.5 H2762.5" fill="none" stroke="#ced0d6" stroke-width="3.6" stroke-linecap="round" stroke-linejoin="round" /><circle cx="2844.3" cy="48.3" r="15.6" fill="none" stroke="#ced0d6" stroke-width="3.6"/><path d="M2856,60 L2867,71" fill="none" stroke="#ced0d6" stroke-width="3.6" stroke-linecap="round" stroke-linejoin="round" /><path d="M2949.29,32.54 L2960.51,32.54 L2962.15,38.34 L2967.99,36.86 L2973.61,46.58 L2969.40,50.90 L2973.61,55.22 L2967.99,64.94 L2962.15,63.46 L2960.51,69.26 L2949.29,69.26 L2947.65,63.46 L2941.81,64.94 L2936.19,55.22 L2940.40,50.90 L2936.19,46.58 L2941.81,36.86 L2947.65,38.34 Z" fill="none" stroke="#ced0d6" stroke-width="3.6" stroke-linecap="round" stroke-linejoin="round" /><circle cx="2954.9" cy="50.9" r="7.6" fill="none" stroke="#ced0d6" stroke-width="3.6"/><path d="M36.6,167.5 V139 Q36.6,135.6 40,135.6 H51 L58.2,142.3 H74.5 Q77.8,142.3 77.8,145.6 V166.8 Q77.8,170.1 74.5,170.1 H40 Q36.6,170.1 36.6,167.5 Z" fill="none" stroke="#6c707e" stroke-width="3.2" stroke-linecap="round" stroke-linejoin="round" /><path d="M33.6,253 H48.5 M65.3,253 H80.3" fill="none" stroke="#6c707e" stroke-width="3.2" stroke-linecap="round" stroke-linejoin="round" /><circle cx="56.9" cy="253" r="8.4" fill="none" stroke="#6c707e" stroke-width="3.2"/><g stroke="#1b2258" stroke-width="1.0" fill="none" opacity="0.85"><line x1="36.3" y1="354.5" x2="81.3" y2="353.5"/><line x1="58.8" y1="330.5" x2="59.8" y2="378.5"/><line x1="42.3" y1="337.5" x2="75.3" y2="371.5"/><path d="M60.3,339.3 A15.2,15.2 0 1,0 74.5,355.5" stroke-width="1.1"/><path d="M48.8,343.5 V365.0 H70.3" stroke-width="0.8"/></g><polygon points="69.80,354.00 69.77,354.78 68.40,355.38 68.28,356.06 69.35,357.10 69.11,357.84 67.62,358.03 67.31,358.65 68.05,359.95 67.61,360.59 66.13,360.35 65.66,360.86 66.00,362.31 65.39,362.81 64.04,362.16 63.45,362.51 63.37,364.01 62.64,364.31 61.53,363.31 60.86,363.48 60.37,364.89 59.58,364.97 58.80,363.70 58.11,363.68 57.23,364.89 56.46,364.75 56.07,363.31 55.41,363.09 54.23,364.01 53.53,363.65 53.56,362.16 52.99,361.77 51.60,362.31 51.02,361.78 51.47,360.35 51.03,359.81 49.55,359.95 49.15,359.27 49.98,358.03 49.71,357.39 48.25,357.10 48.05,356.34 49.20,355.38 49.12,354.69 47.80,354.00 47.83,353.22 49.20,352.62 49.32,351.94 48.25,350.90 48.49,350.16 49.98,349.97 50.29,349.35 49.55,348.05 49.99,347.41 51.47,347.65 51.94,347.14 51.60,345.69 52.21,345.19 53.56,345.84 54.15,345.49 54.23,343.99 54.96,343.69 56.07,344.69 56.74,344.52 57.23,343.11 58.02,343.03 58.80,344.30 59.49,344.32 60.37,343.11 61.14,343.25 61.53,344.69 62.19,344.91 63.37,343.99 64.07,344.35 64.04,345.84 64.61,346.23 66.00,345.69 66.58,346.22 66.13,347.65 66.57,348.19 68.05,348.05 68.45,348.73 67.62,349.97 67.89,350.61 69.35,350.90 69.55,351.66 68.40,352.62 68.48,353.31" fill="#1b2258"/><circle cx="58.8" cy="354" r="5.9" fill="#f7f8fa"/><g stroke="#1b2258" stroke-width="0.8" opacity="0.8"><line x1="54.8" y1="350.0" x2="62.8" y2="358.0"/><line x1="59.3" y1="348.0" x2="59.3" y2="360.0"/><line x1="52.8" y1="354.5" x2="64.8" y2="354.5"/></g><g transform="translate(56.9,453.3) scale(1.0)"><path d="M-24,8.7 C-24,2.7 -21,0.2 -18,-0.8 L18,-0.8 C21,0.2 24,2.7 24,8.7 C24,13.7 16,20.2 0,20.2 C-16,20.2 -24,13.7 -24,8.7 Z" fill="#6c707e" /><path d="M-15.2,-0.1 C-12,1.2 -7,0.2 -3,-1.8 L0,-3.8 L3,-1.8 C7,0.2 12,1.2 15.1,-0.1 V12.1 C11,14.7 6,16.2 0,16.2 C-6,16.2 -11,14.7 -15.2,12.1 Z" fill="#f7f8fa" /><rect x="-19" y="-21.2" width="19" height="20.8" rx="8.5" fill="#6c707e"/><rect x="0" y="-21.2" width="19" height="20.8" rx="8.5" fill="#6c707e"/><rect x="-15.2" y="-17" width="12.3" height="12.6" rx="4.5" fill="#f7f8fa"/><rect x="2.6" y="-17" width="12.3" height="12.6" rx="4.5" fill="#f7f8fa"/></g><circle cx="66.4" cy="462.4" r="16.2" fill="#f7f8fa"/><circle cx="66.4" cy="462.4" r="13.3" fill="#6c707e"/><path d="M62.2,458.3 C63,455.5 65,454.6 66.6,454.6 C69,454.6 70.6,456.3 70.6,458.2 C70.6,460.6 67.5,461.5 66.7,463.8" fill="none" stroke="#f7f8fa" stroke-width="3.0" stroke-linecap="round" stroke-linejoin="round" /><circle cx="66.7" cy="469.3" r="2.4" fill="#f7f8fa"/><rect x="20.2" y="516" width="75.8" height="75.8" rx="14" fill="#dfe1e5"/><path d="M66.6,539 A16.5,16.5 0 0,0 39.8,553.5 M47,567.3 A16.5,16.5 0 0,0 74.4,549" fill="none" stroke="#6c707e" stroke-width="3.3" stroke-linecap="round" stroke-linejoin="round" /><path d="M32.6,551.3 L39.8,558.5 L47,551.3 M67.3,555 L74.4,547.5 L81.5,555" fill="none" stroke="#6c707e" stroke-width="3.3" stroke-linecap="round" stroke-linejoin="round" /><rect x="28" y="618" width="60" height="2" fill="#c9ccd6"/><rect x="38.9" y="662.7" width="14.4" height="14.4" rx="3" fill="none" stroke="#6c707e" stroke-width="3.4"/><rect x="38.9" y="684.6" width="14.4" height="14.4" rx="3" fill="none" stroke="#6c707e" stroke-width="3.4"/><rect x="60.8" y="684.6" width="14.4" height="14.4" rx="3" fill="none" stroke="#6c707e" stroke-width="3.4"/><circle cx="40.7" cy="781" r="3.8" fill="#6c707e"/><circle cx="57" cy="781" r="3.8" fill="#6c707e"/><circle cx="73.3" cy="781" r="3.8" fill="#6c707e"/><path d="M34.9,882.9 L45.3,864 H68.5 L79,882.9 L68.5,901.8 H45.3 Z" fill="none" stroke="#6c707e" stroke-width="3.3" stroke-linecap="round" stroke-linejoin="round" /><path d="M51.3,873.7 L67.4,883 L51.3,892 Z" fill="none" stroke="#6c707e" stroke-width="3.3" stroke-linecap="round" stroke-linejoin="round" /><g stroke="#1b2258" stroke-width="1.0" fill="none" opacity="0.85"><line x1="36.3" y1="983.5" x2="81.3" y2="982.5"/><line x1="58.8" y1="959.5" x2="59.8" y2="1007.5"/><line x1="42.3" y1="966.5" x2="75.3" y2="1000.5"/><path d="M60.3,968.3 A15.2,15.2 0 1,0 74.5,984.5" stroke-width="1.1"/><path d="M48.8,972.5 V994.0 H70.3" stroke-width="0.8"/></g><polygon points="69.80,983.00 69.77,983.78 68.40,984.38 68.28,985.06 69.35,986.10 69.11,986.84 67.62,987.03 67.31,987.65 68.05,988.95 67.61,989.59 66.13,989.35 65.66,989.86 66.00,991.31 65.39,991.81 64.04,991.16 63.45,991.51 63.37,993.01 62.64,993.31 61.53,992.31 60.86,992.48 60.37,993.89 59.58,993.97 58.80,992.70 58.11,992.68 57.23,993.89 56.46,993.75 56.07,992.31 55.41,992.09 54.23,993.01 53.53,992.65 53.56,991.16 52.99,990.77 51.60,991.31 51.02,990.78 51.47,989.35 51.03,988.81 49.55,988.95 49.15,988.27 49.98,987.03 49.71,986.39 48.25,986.10 48.05,985.34 49.20,984.38 49.12,983.69 47.80,983.00 47.83,982.22 49.20,981.62 49.32,980.94 48.25,979.90 48.49,979.16 49.98,978.97 50.29,978.35 49.55,977.05 49.99,976.41 51.47,976.65 51.94,976.14 51.60,974.69 52.21,974.19 53.56,974.84 54.15,974.49 54.23,972.99 54.96,972.69 56.07,973.69 56.74,973.52 57.23,972.11 58.02,972.03 58.80,973.30 59.49,973.32 60.37,972.11 61.14,972.25 61.53,973.69 62.19,973.91 63.37,972.99 64.07,973.35 64.04,974.84 64.61,975.23 66.00,974.69 66.58,975.22 66.13,976.65 66.57,977.19 68.05,977.05 68.45,977.73 67.62,978.97 67.89,979.61 69.35,979.90 69.55,980.66 68.40,981.62 68.48,982.31" fill="#1b2258"/><circle cx="58.8" cy="983" r="5.9" fill="#f7f8fa"/><g stroke="#1b2258" stroke-width="0.8" opacity="0.8"><line x1="54.8" y1="979.0" x2="62.8" y2="987.0"/><line x1="59.3" y1="977.0" x2="59.3" y2="989.0"/><line x1="52.8" y1="983.5" x2="64.8" y2="983.5"/></g><circle cx="57.5" cy="1083.5" r="23.6" fill="#6e6e6e"/><path d="M45.7,1094.3 L57.7,1069.8 L69.5,1094.3 L54.4,1088.4" fill="none" stroke="#f7f8fa" stroke-width="4.6" stroke-linecap="round" stroke-linejoin="round" /><g stroke="#1b2258" stroke-width="1.0" fill="none" opacity="0.85"><line x1="36.3" y1="1184.5" x2="81.3" y2="1183.5"/><line x1="58.8" y1="1160.5" x2="59.8" y2="1208.5"/><line x1="42.3" y1="1167.5" x2="75.3" y2="1201.5"/><path d="M60.3,1169.3 A15.2,15.2 0 1,0 74.5,1185.5" stroke-width="1.1"/><path d="M48.8,1173.5 V1195.0 H70.3" stroke-width="0.8"/></g><polygon points="69.80,1184.00 69.77,1184.78 68.40,1185.38 68.28,1186.06 69.35,1187.10 69.11,1187.84 67.62,1188.03 67.31,1188.65 68.05,1189.95 67.61,1190.59 66.13,1190.35 65.66,1190.86 66.00,1192.31 65.39,1192.81 64.04,1192.16 63.45,1192.51 63.37,1194.01 62.64,1194.31 61.53,1193.31 60.86,1193.48 60.37,1194.89 59.58,1194.97 58.80,1193.70 58.11,1193.68 57.23,1194.89 56.46,1194.75 56.07,1193.31 55.41,1193.09 54.23,1194.01 53.53,1193.65 53.56,1192.16 52.99,1191.77 51.60,1192.31 51.02,1191.78 51.47,1190.35 51.03,1189.81 49.55,1189.95 49.15,1189.27 49.98,1188.03 49.71,1187.39 48.25,1187.10 48.05,1186.34 49.20,1185.38 49.12,1184.69 47.80,1184.00 47.83,1183.22 49.20,1182.62 49.32,1181.94 48.25,1180.90 48.49,1180.16 49.98,1179.97 50.29,1179.35 49.55,1178.05 49.99,1177.41 51.47,1177.65 51.94,1177.14 51.60,1175.69 52.21,1175.19 53.56,1175.84 54.15,1175.49 54.23,1173.99 54.96,1173.69 56.07,1174.69 56.74,1174.52 57.23,1173.11 58.02,1173.03 58.80,1174.30 59.49,1174.32 60.37,1173.11 61.14,1173.25 61.53,1174.69 62.19,1174.91 63.37,1173.99 64.07,1174.35 64.04,1175.84 64.61,1176.23 66.00,1175.69 66.58,1176.22 66.13,1177.65 66.57,1178.19 68.05,1178.05 68.45,1178.73 67.62,1179.97 67.89,1180.61 69.35,1180.90 69.55,1181.66 68.40,1182.62 68.48,1183.31" fill="#1b2258"/><circle cx="58.8" cy="1184" r="5.9" fill="#f7f8fa"/><g stroke="#1b2258" stroke-width="0.8" opacity="0.8"><line x1="54.8" y1="1180.0" x2="62.8" y2="1188.0"/><line x1="59.3" y1="1178.0" x2="59.3" y2="1190.0"/><line x1="52.8" y1="1184.5" x2="64.8" y2="1184.5"/></g><g stroke="#1b2258" stroke-width="1.0" fill="none" opacity="0.85"><line x1="36.3" y1="1284.5" x2="81.3" y2="1283.5"/><line x1="58.8" y1="1260.5" x2="59.8" y2="1308.5"/><line x1="42.3" y1="1267.5" x2="75.3" y2="1301.5"/><path d="M60.3,1269.3 A15.2,15.2 0 1,0 74.5,1285.5" stroke-width="1.1"/><path d="M48.8,1273.5 V1295.0 H70.3" stroke-width="0.8"/></g><polygon points="69.80,1284.00 69.77,1284.78 68.40,1285.38 68.28,1286.06 69.35,1287.10 69.11,1287.84 67.62,1288.03 67.31,1288.65 68.05,1289.95 67.61,1290.59 66.13,1290.35 65.66,1290.86 66.00,1292.31 65.39,1292.81 64.04,1292.16 63.45,1292.51 63.37,1294.01 62.64,1294.31 61.53,1293.31 60.86,1293.48 60.37,1294.89 59.58,1294.97 58.80,1293.70 58.11,1293.68 57.23,1294.89 56.46,1294.75 56.07,1293.31 55.41,1293.09 54.23,1294.01 53.53,1293.65 53.56,1292.16 52.99,1291.77 51.60,1292.31 51.02,1291.78 51.47,1290.35 51.03,1289.81 49.55,1289.95 49.15,1289.27 49.98,1288.03 49.71,1287.39 48.25,1287.10 48.05,1286.34 49.20,1285.38 49.12,1284.69 47.80,1284.00 47.83,1283.22 49.20,1282.62 49.32,1281.94 48.25,1280.90 48.49,1280.16 49.98,1279.97 50.29,1279.35 49.55,1278.05 49.99,1277.41 51.47,1277.65 51.94,1277.14 51.60,1275.69 52.21,1275.19 53.56,1275.84 54.15,1275.49 54.23,1273.99 54.96,1273.69 56.07,1274.69 56.74,1274.52 57.23,1273.11 58.02,1273.03 58.80,1274.30 59.49,1274.32 60.37,1273.11 61.14,1273.25 61.53,1274.69 62.19,1274.91 63.37,1273.99 64.07,1274.35 64.04,1275.84 64.61,1276.23 66.00,1275.69 66.58,1276.22 66.13,1277.65 66.57,1278.19 68.05,1278.05 68.45,1278.73 67.62,1279.97 67.89,1280.61 69.35,1280.90 69.55,1281.66 68.40,1282.62 68.48,1283.31" fill="#1b2258"/><circle cx="58.8" cy="1284" r="5.9" fill="#f7f8fa"/><g stroke="#1b2258" stroke-width="0.8" opacity="0.8"><line x1="54.8" y1="1280.0" x2="62.8" y2="1288.0"/><line x1="59.3" y1="1278.0" x2="59.3" y2="1290.0"/><line x1="52.8" y1="1284.5" x2="64.8" y2="1284.5"/></g><circle cx="57.5" cy="1383" r="23.6" fill="#6e6e6e"/><path d="M45.7,1393.8 L57.7,1369.3 L69.5,1393.8 L54.4,1387.9" fill="none" stroke="#f7f8fa" stroke-width="4.6" stroke-linecap="round" stroke-linejoin="round" /><rect x="36.2" y="1464.7" width="41.1" height="36.3" rx="4" fill="none" stroke="#6c707e" stroke-width="3.3"/><path d="M46,1472.7 L53.6,1480 L46,1486.9 M56.4,1489.6 H67.6" fill="none" stroke="#6c707e" stroke-width="3.3" stroke-linecap="round" stroke-linejoin="round" /><circle cx="56.9" cy="1582.7" r="20.5" fill="none" stroke="#6c707e" stroke-width="3.3"/><path d="M56.9,1572 V1583.5" fill="none" stroke="#6c707e" stroke-width="4.2" stroke-linecap="round" stroke-linejoin="round" /><circle cx="56.9" cy="1592.7" r="2.8" fill="#6c707e"/><circle cx="45.5" cy="1669" r="5.9" fill="none" stroke="#6c707e" stroke-width="3.3"/><circle cx="66.9" cy="1673.6" r="5.9" fill="none" stroke="#6c707e" stroke-width="3.3"/><path d="M45.5,1675 V1702.7 M66.9,1679.5 V1686 Q66.9,1692.7 60,1692.7 H45.5" fill="none" stroke="#6c707e" stroke-width="3.3" stroke-linecap="round" stroke-linejoin="round" /><circle cx="973.6" cy="143.8" r="2.8" fill="#6c707e"/><circle cx="973.6" cy="156" r="2.8" fill="#6c707e"/><circle cx="973.6" cy="168.4" r="2.8" fill="#6c707e"/><path d="M1026,156 H1058" fill="none" stroke="#6c707e" stroke-width="2.6" stroke-linecap="round" stroke-linejoin="round" /><path d="M152.5,246 L162,236.5 L171.5,246 M152.5,258 L162,267.5 L171.5,258" fill="none" stroke="#6c707e" stroke-width="2.7" stroke-linecap="round" stroke-linejoin="round" /><path d="M220.5,237.3 L230,246.7 L239.5,237.3 M220.5,266.4 L230,256.9 L239.5,266.4" fill="none" stroke="#6c707e" stroke-width="2.7" stroke-linecap="round" stroke-linejoin="round" /><rect x="272.5" y="228" width="1.8" height="46" fill="#cdd0d8"/><path d="M325,240.4 A14,14 0 0,0 304,253 M311,264.6 A14,14 0 0,0 332,251.5" fill="none" stroke="#b5b6b9" stroke-width="2.6" stroke-linecap="round" stroke-linejoin="round" /><path d="M298.5,249 L303.5,255.5 L310,251.5 M327.5,254 L333,247.5 L338,254.5" fill="none" stroke="#b5b6b9" stroke-width="2.6" stroke-linecap="round" stroke-linejoin="round" /><path d="M386,258.5 V238 M378.5,245.5 L386,238 L393.5,245.5" fill="none" stroke="#b5b6b9" stroke-width="2.6" stroke-linecap="round" stroke-linejoin="round" /><path d="M372,257.3 V265.5 H400 V257.3" fill="none" stroke="#b5b6b9" stroke-width="2.6" stroke-linecap="round" stroke-linejoin="round" stroke-linecap="butt"/><path d="M266.4000000000001,325.9 L256.29999999999995,334.3 L266.4000000000001,342.7 M277.70000000000005,319.5 L269.79999999999995,348.4 M281.5,325.9 L291.5999999999999,334.3 L281.5,342.7" fill="none" stroke="#da712f" stroke-width="3.3" stroke-linecap="round" stroke-linejoin="round" /><path d="M266.4000000000001,385.9 L256.29999999999995,394.3 L266.4000000000001,402.7 M277.70000000000005,379.5 L269.79999999999995,408.4 M281.5,385.9 L291.5999999999999,394.3 L281.5,402.7" fill="none" stroke="#da712f" stroke-width="3.3" stroke-linecap="round" stroke-linejoin="round" /><path d="M1140.4,147.9 L1130.3,156.3 L1140.4,164.7 M1151.7,141.5 L1143.8,170.4 M1155.5,147.9 L1165.6,156.3 L1155.5,164.7" fill="none" stroke="#da712f" stroke-width="3.3" stroke-linecap="round" stroke-linejoin="round" /><path d="M1455.5,148 L1472,164.5 M1472,148 L1455.5,164.5" fill="none" stroke="#a8adbd" stroke-width="2.5" stroke-linecap="round" stroke-linejoin="round" /><circle cx="2858" cy="143.5" r="2.8" fill="#6c707e"/><circle cx="2858" cy="156" r="2.8" fill="#6c707e"/><circle cx="2858" cy="168.3" r="2.8" fill="#6c707e"/><path d="M1446,264.5 V237 M1435.5,247.5 L1446,237 L1456.5,247.5" fill="none" stroke="#c2c5cc" stroke-width="2.5" stroke-linecap="round" stroke-linejoin="round" /><path d="M1514,235.5 V263 M1503.5,252.5 L1514,263 L1524.5,252.5" fill="none" stroke="#6c707e" stroke-width="2.5" stroke-linecap="round" stroke-linejoin="round" /><path d="M1571,264 V256.5 L1590,237.5 Q1592.5,235 1595,237.5 L1597.5,240 Q1600,242.5 1597.5,245 L1578.5,264 Z M1583.5,243.5 L1592,252" fill="none" stroke="#6c707e" stroke-width="2.6" stroke-linecap="round" stroke-linejoin="round" /><path d="M1335,245 L1357,245 L1346.0,257.5 Z" fill="#6e6e6e"/><path d="M1952.6,245 L1975,245 L1963.8,257.5 Z" fill="#6e6e6e"/><path d="M2549,245 L2571,245 L2560.0,257.5 Z" fill="#6e6e6e"/><path d="M2650.5,241 L2660.5,250.5 L2650.5,260" fill="none" stroke="#818594" stroke-width="2.5" stroke-linecap="round" stroke-linejoin="round" /><path d="M2964.5,133 C2963,132.6 2961,132.3 2959,132.3 C2952.5,132.3 2947.5,137.5 2947.5,144 V151.5 Q2947.5,153.5 2946.5,155.3 L2941.8,163.5 Q2940.6,166.3 2943.8,166.3 H2974.6 Q2977.8,166.3 2976.6,163.5 L2971.9,155.3 Q2970.9,153.5 2970.9,151.5 V149.5" fill="none" stroke="#6c707e" stroke-width="3.2" stroke-linecap="round" stroke-linejoin="round" /><path d="M2954,172.3 H2964 Q2962.5,176.4 2959,176.4 Q2955.5,176.4 2954,172.3 Z" fill="#6c707e"/><circle cx="2975.3" cy="136.7" r="8.6" fill="#548af7"/><path d="M2942.6,237.2 C2950,234 2966,234 2973,240 C2980,246 2978,256 2970,260 C2962,264 2952,262 2950.6,256 C2949.5,251 2954,250 2959,251.5" fill="none" stroke="#6c707e" stroke-width="3.6" stroke-linecap="round" stroke-linejoin="round" /><path d="M2959,254.5 C2964,256 2968,253 2966.5,248 C2964.5,243 2956,242 2950,244 C2942,247 2939,255 2943,262 C2948,271 2964,272 2975.5,268.5" fill="none" stroke="#6c707e" stroke-width="3.6" stroke-linecap="round" stroke-linejoin="round" /><ellipse cx="2959.2" cy="338.5" rx="18.2" ry="6.5" fill="none" stroke="#6c707e" stroke-width="3.3"/><path d="M2941,338.5 V366.5 C2941,371 2950,374 2959.2,374 C2968.4,374 2977.4,371 2977.4,366.5 V338.5 M2941,348 C2941,352.5 2950,355 2959.2,355 C2968.4,355 2977.4,352.5 2977.4,348 M2941,357.5 C2941,362 2950,364.5 2959.2,364.5 C2968.4,364.5 2977.4,362 2977.4,357.5" fill="none" stroke="#6c707e" stroke-width="3.3" stroke-linecap="round" stroke-linejoin="round" /><path d="M2938.5,466 L2944.5,440 M2945,446 C2948.5,440.5 2953.5,438.8 2957.5,438.8 C2961.5,438.8 2962.5,442 2961.8,446 L2957.5,466 M2962.5,446 C2966,440.5 2971,438.8 2975,438.8 C2979.5,438.8 2980.5,442 2979.8,446 L2975.5,466" fill="none" stroke="#6c707e" stroke-width="4.9" stroke-linecap="round" stroke-linejoin="round" /><g transform="translate(2959,553.3) scale(1.0)"><path d="M-24,8.7 C-24,2.7 -21,0.2 -18,-0.8 L18,-0.8 C21,0.2 24,2.7 24,8.7 C24,13.7 16,20.2 0,20.2 C-16,20.2 -24,13.7 -24,8.7 Z" fill="#6c707e" /><path d="M-15.2,-0.1 C-12,1.2 -7,0.2 -3,-1.8 L0,-3.8 L3,-1.8 C7,0.2 12,1.2 15.1,-0.1 V12.1 C11,14.7 6,16.2 0,16.2 C-6,16.2 -11,14.7 -15.2,12.1 Z" fill="#f7f8fa" /><rect x="-19" y="-21.2" width="19" height="20.8" rx="8.5" fill="#6c707e"/><rect x="0" y="-21.2" width="19" height="20.8" rx="8.5" fill="#6c707e"/><rect x="-15.2" y="-17" width="12.3" height="12.6" rx="4.5" fill="#f7f8fa"/><rect x="2.6" y="-17" width="12.3" height="12.6" rx="4.5" fill="#f7f8fa"/><rect x="-7.3" y="2.8" width="4.2" height="8.7" rx="2.1" fill="#6c707e"/><rect x="3" y="2.8" width="4.2" height="8.7" rx="2.1" fill="#6c707e"/></g><defs><radialGradient id="psg" cx="0.75" cy="0.6" r="0.6"><stop offset="0" stop-color="#cfcfd2"/><stop offset="1" stop-color="#f7f8fa"/></radialGradient></defs><rect x="2936" y="630" width="48" height="48" fill="url(#psg)"/><defs><filter id="bl" x="-20%" y="-20%" width="140%" height="140%"><feGaussianBlur stdDeviation="0.9"/></filter></defs><path d="M2952,632 V674 M2938.5,642 C2938.5,658 2943,663 2952,663 C2961,663 2966,658 2966,642" fill="none" stroke="#9845e4" stroke-width="4.2" stroke-linecap="round" stroke-linejoin="round" filter="url(#bl)"/><g transform="translate(2959.1,753.2) scale(1.0)"><path d="M-24,8.7 C-24,2.7 -21,0.2 -18,-0.8 L18,-0.8 C21,0.2 24,2.7 24,8.7 C24,13.7 16,20.2 0,20.2 C-16,20.2 -24,13.7 -24,8.7 Z" fill="#6c707e" /><path d="M-15.2,-0.1 C-12,1.2 -7,0.2 -3,-1.8 L0,-3.8 L3,-1.8 C7,0.2 12,1.2 15.1,-0.1 V12.1 C11,14.7 6,16.2 0,16.2 C-6,16.2 -11,14.7 -15.2,12.1 Z" fill="#f7f8fa" /><rect x="-19" y="-21.2" width="19" height="20.8" rx="8.5" fill="#6c707e"/><rect x="0" y="-21.2" width="19" height="20.8" rx="8.5" fill="#6c707e"/><rect x="-15.2" y="-17" width="12.3" height="12.6" rx="4.5" fill="#f7f8fa"/><rect x="2.6" y="-17" width="12.3" height="12.6" rx="4.5" fill="#f7f8fa"/><rect x="-7.3" y="2.8" width="4.2" height="8.7" rx="2.1" fill="#6c707e"/><rect x="3" y="2.8" width="4.2" height="8.7" rx="2.1" fill="#6c707e"/></g><rect x="2956.6" y="750.5" width="28.8" height="23.6" rx="7.5" fill="#f7f8fa"/><path d="M2968.5,771 L2978.5,779.5 L2978.5,771 Z" fill="#f7f8fa"/><rect x="2959.9" y="753" width="22.9" height="18" rx="5" fill="#6c707e"/><path d="M2970.8,770 L2977,776.2 L2977,770 Z" fill="#6c707e"/><g stroke="#1b2258" stroke-width="0.82" fill="none" opacity="0.85"><line x1="46.239999999999995" y1="1770.5" x2="83.13999999999999" y2="1769.68"/><line x1="64.69" y1="1750.82" x2="65.50999999999999" y2="1790.18"/><line x1="51.16" y1="1756.56" x2="78.22" y2="1784.44"/><path d="M65.91999999999999,1758.036 A15.2,15.2 0 1,0 77.564,1771.32" stroke-width="0.902"/><path d="M56.489999999999995,1761.48 V1779.11 H74.11999999999999" stroke-width="0.656"/></g><polygon points="73.62,1770.00 73.60,1770.64 72.47,1771.13 72.37,1771.69 73.25,1772.54 73.05,1773.15 71.84,1773.30 71.58,1773.81 72.19,1774.88 71.82,1775.41 70.61,1775.21 70.22,1775.62 70.51,1776.82 70.01,1777.22 68.90,1776.69 68.41,1776.98 68.35,1778.20 67.75,1778.45 66.84,1777.63 66.29,1777.77 65.88,1778.93 65.24,1779.00 64.60,1777.95 64.03,1777.93 63.32,1778.93 62.68,1778.81 62.36,1777.63 61.82,1777.45 60.85,1778.20 60.28,1777.92 60.30,1776.69 59.83,1776.37 58.69,1776.82 58.22,1776.38 58.59,1775.21 58.23,1774.77 57.01,1774.88 56.68,1774.32 57.36,1773.30 57.15,1772.78 55.95,1772.54 55.79,1771.92 56.73,1771.13 56.67,1770.57 55.58,1770.00 55.60,1769.36 56.73,1768.87 56.83,1768.31 55.95,1767.46 56.15,1766.85 57.36,1766.70 57.62,1766.19 57.01,1765.12 57.38,1764.59 58.59,1764.79 58.98,1764.38 58.69,1763.18 59.19,1762.78 60.30,1763.31 60.79,1763.02 60.85,1761.80 61.45,1761.55 62.36,1762.37 62.91,1762.23 63.32,1761.07 63.96,1761.00 64.60,1762.05 65.17,1762.07 65.88,1761.07 66.52,1761.19 66.84,1762.37 67.38,1762.55 68.35,1761.80 68.92,1762.08 68.90,1763.31 69.37,1763.63 70.51,1763.18 70.98,1763.62 70.61,1764.79 70.97,1765.23 72.19,1765.12 72.52,1765.68 71.84,1766.70 72.05,1767.22 73.25,1767.46 73.41,1768.08 72.47,1768.87 72.53,1769.43" fill="#1b2258"/><circle cx="64.6" cy="1770" r="4.838" fill="#f7f8fa"/><g stroke="#1b2258" stroke-width="0.656" opacity="0.8"><line x1="61.31999999999999" y1="1766.72" x2="67.88" y2="1773.28"/><line x1="65.1" y1="1765.08" x2="65.1" y2="1774.92"/><line x1="59.67999999999999" y1="1770.5" x2="69.52" y2="1770.5"/></g><g transform="translate(2541.5,1772) scale(0.68) translate(-2959,-252.5)"><path d="M2942.6,237.2 C2950,234 2966,234 2973,240 C2980,246 2978,256 2970,260 C2962,264 2952,262 2950.6,256 C2949.5,251 2954,250 2959,251.5" fill="none" stroke="#6c707e" stroke-width="4.4" stroke-linecap="round" stroke-linejoin="round" /><path d="M2959,254.5 C2964,256 2968,253 2966.5,248 C2964.5,243 2956,242 2950,244 C2942,247 2939,255 2943,262 C2948,271 2964,272 2975.5,268.5" fill="none" stroke="#6c707e" stroke-width="4.4" stroke-linecap="round" stroke-linejoin="round" /></g><path d="M2527,1787 L2557,1757" fill="none" stroke="#f7f8fa" stroke-width="7.5" stroke-linecap="round" stroke-linejoin="round" stroke-linecap="butt"/><path d="M2527,1787 L2557,1757" fill="none" stroke="#6c707e" stroke-width="3.0" stroke-linecap="round" stroke-linejoin="round" /><g transform="translate(2622,1772.5) scale(0.72)"><path d="M-24,8.7 C-24,2.7 -21,0.2 -18,-0.8 L18,-0.8 C21,0.2 24,2.7 24,8.7 C24,13.7 16,20.2 0,20.2 C-16,20.2 -24,13.7 -24,8.7 Z" fill="#6c707e" /><path d="M-15.2,-0.1 C-12,1.2 -7,0.2 -3,-1.8 L0,-3.8 L3,-1.8 C7,0.2 12,1.2 15.1,-0.1 V12.1 C11,14.7 6,16.2 0,16.2 C-6,16.2 -11,14.7 -15.2,12.1 Z" fill="#f7f8fa" /><rect x="-19" y="-21.2" width="19" height="20.8" rx="8.5" fill="#6c707e"/><rect x="0" y="-21.2" width="19" height="20.8" rx="8.5" fill="#6c707e"/><rect x="-15.2" y="-17" width="12.3" height="12.6" rx="4.5" fill="#f7f8fa"/><rect x="2.6" y="-17" width="12.3" height="12.6" rx="4.5" fill="#f7f8fa"/><rect x="-7.3" y="2.8" width="4.2" height="8.7" rx="2.1" fill="#6c707e"/><rect x="3" y="2.8" width="4.2" height="8.7" rx="2.1" fill="#6c707e"/></g><circle cx="2701.8" cy="1771.9" r="16" fill="none" stroke="#6c707e" stroke-width="3.0"/><path d="M2701.8,1763 V1772.5" fill="none" stroke="#6c707e" stroke-width="4.0" stroke-linecap="round" stroke-linejoin="round" /><circle cx="2701.8" cy="1779.5" r="2.5" fill="#6c707e"/></svg>
<div class="ui" style="left:140.5px;top:143.4px;font-size:30.6px;color:#000;font-weight:bold;">Configuration Synchronization</div>
<div class="ui" style="left:303.0px;top:320.2px;font-size:31.9px;color:#000;">Addressbook.xml (Addressbook)</div>
<div class="ui" style="left:303.0px;top:380.0px;font-size:31.75px;color:#3a832c;">canteen.xml (CSV-2 (Canteen Ordering System))</div>
<div class="ui" style="left:164.5px;top:1666.6px;font-size:30.8px;color:#000;">Save local</div>
<div class="ui" style="left:405.0px;top:1665.7px;font-size:31.9px;color:#000;">Update remote</div>
<div class="ui" style="left:1180.5px;top:141.7px;font-size:31.85px;color:#000;">Addressbook.xml</div>
<div class="ui" style="left:1150.0px;top:235.9px;font-size:28.8px;color:#000;">Natural Keys</div>
<div class="ui" style="left:1669.5px;top:234.4px;font-size:30.2px;color:#000;">Side-by-side viewer</div>
<div class="ui" style="left:2063.0px;top:235.4px;font-size:29.3px;color:#000;">Ignore whitespaces and empty lines</div>
<div class="ui" style="left:2708.0px;top:234.4px;font-size:32.8px;color:#000;">6 differences</div>
<div class="ui" style="left:1109.5px;top:295.9px;font-size:31.0px;color:#000;">Addressbook.xml (LOCAL) (/)</div>
<div class="ui" style="left:2045.5px;top:296.0px;font-size:30.9px;color:#000;">Addressbook.xml (REMOTE) (/)</div>
<div class="ui" style="left:1150.0px;top:1686.1px;font-size:31.2px;color:#000;">Object Delta</div>
<div class="ui" style="left:1387.5px;top:1684.1px;font-size:33.6px;color:#000;">Text</div>
<div class="ui" style="left:95.0px;top:1756.0px;font-size:31.1px;color:#6c707e;">Addressbook.xml (LOCAL)</div>
<div class="ui" style="left:2752.0px;top:1753.9px;font-size:33.4px;color:#6c707e;">2434 of 6600M</div>
<div class="ui" style="left:266.5px;top:38.2px;font-size:31.7px;color:#dfe1e5;-webkit-text-stroke:0.45px #dfe1e5">t67</div>
<div class="ui" style="left:450.5px;top:38.5px;font-size:31.3px;color:#dfe1e5;-webkit-text-stroke:0.45px #dfe1e5">master</div>
<div class="ui" style="left:1511.5px;top:39.1px;font-size:29.8px;color:#dfe1e5;-webkit-text-stroke:0.45px #dfe1e5">demo</div>
<div class="ui" style="left:1991.5px;top:38.8px;font-size:32.5px;color:#dfe1e5;-webkit-text-stroke:0.45px #dfe1e5">remote midpoint</div>
</div>
<div class="abs" style="left:7.5px;top:1.5px;width:3003px;height:1807px;border-radius:16px;border:1.5px solid rgba(110,112,116,.85)"></div>
</body></html>
